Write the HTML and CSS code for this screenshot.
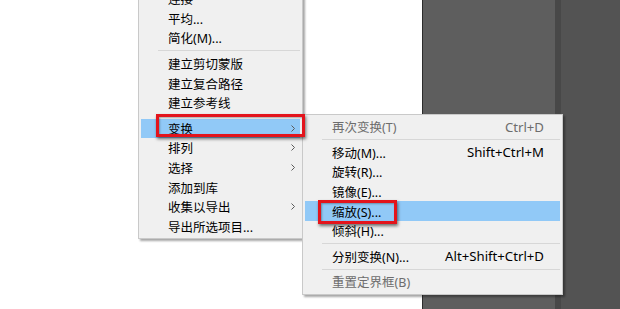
FILE: index.html
```html
<!DOCTYPE html>
<html lang="zh-CN">
<head>
    <meta charset="UTF-8">
    <meta name="viewport" content="width=device-width, initial-scale=1.0">
    <title>变换菜单</title>
    <link rel="stylesheet" href="styles.css">
</head>
<body>
    <div class="desktop">
        <div class="canvas"></div>
        <div class="panel"></div>
        <div class="panel-edge"></div>
        <div class="dock"></div>

        <!-- Context menu -->
        <ul class="menu menu-main">
            <li class="item">连接</li>
            <li class="item">平均...</li>
            <li class="item">简化(M)...</li>
            <li class="sep"></li>
            <li class="item">建立剪切蒙版</li>
            <li class="item">建立复合路径</li>
            <li class="item">建立参考线</li>
            <li class="sep"></li>
            <li class="item active">变换<span class="arrow"><svg width="4" height="7" viewBox="0 0 4 7"><path d="M0.5 0.5 L3.5 3.5 L0.5 6.5" fill="none" stroke="#5a5a5a" stroke-width="1"/></svg></span></li>
            <li class="item">排列<span class="arrow"><svg width="4" height="7" viewBox="0 0 4 7"><path d="M0.5 0.5 L3.5 3.5 L0.5 6.5" fill="none" stroke="#5a5a5a" stroke-width="1"/></svg></span></li>
            <li class="item">选择<span class="arrow"><svg width="4" height="7" viewBox="0 0 4 7"><path d="M0.5 0.5 L3.5 3.5 L0.5 6.5" fill="none" stroke="#5a5a5a" stroke-width="1"/></svg></span></li>
            <li class="item">添加到库</li>
            <li class="item">收集以导出<span class="arrow"><svg width="4" height="7" viewBox="0 0 4 7"><path d="M0.5 0.5 L3.5 3.5 L0.5 6.5" fill="none" stroke="#5a5a5a" stroke-width="1"/></svg></span></li>
            <li class="item">导出所选项目...</li>
        </ul>

        <!-- Transform submenu -->
        <ul class="menu menu-sub">
            <li class="item disabled">再次变换(T)<span class="shortcut">Ctrl+D</span></li>
            <li class="sep"></li>
            <li class="item">移动(M)...<span class="shortcut">Shift+Ctrl+M</span></li>
            <li class="item">旋转(R)...</li>
            <li class="item">镜像(E)...</li>
            <li class="item active">缩放(S)...</li>
            <li class="item">倾斜(H)...</li>
            <li class="sep"></li>
            <li class="item">分别变换(N)...<span class="shortcut">Alt+Shift+Ctrl+D</span></li>
            <li class="sep"></li>
            <li class="item disabled">重置定界框(B)</li>
        </ul>

        <!-- Red annotation frames -->
        <div class="callout callout-main"></div>
        <div class="callout callout-sub"></div>
    </div>
</body>
</html>
```

FILE: styles.css
```css
body {
    margin: 0;
    padding: 0;
    background-color: #fff;
    font-family: "Noto Sans", "Noto Sans CJK SC", sans-serif;
    font-size: 12.5px;
    color: #000;
}
.desktop {
    position: relative;
    display: flex;
    width: 620px;
    height: 309px;
    overflow: hidden;
}
.canvas {
    flex: 0 0 422px;
    background-color: #fff;
}
.panel {
    flex: 0 0 132px;
    background-color: #5e5e5e;
    border-left: 1px solid #2c2c2c;
}
.panel-edge {
    flex: 0 0 6px;
    background-color: #484848;
}
.dock {
    flex: 1;
    background-color: #535353;
}
.menu {
    position: absolute;
    list-style: none;
    margin: 0;
    padding: 2px;
    background-color: #f0f0f0;
    border: 1px solid #c9c9c9;
    box-shadow: 2px 2px 2px rgba(0, 0, 0, 0.35);
}
.menu-main {
    left: 138px;
    top: -14px;
    width: 159px;
}
.menu-sub {
    left: 302px;
    top: 114px;
    width: 255px;
}
.item {
    display: flex;
    align-items: center;
    height: 19.6px;
    padding: 0 5px 0 27px;
    white-space: nowrap;
}
.menu-sub .item {
    padding-right: 16px;
}
.item.active {
    background-color: #91c9f7;
}
.item.disabled {
    color: #6d6d6d;
}
.arrow {
    margin-left: auto;
    display: flex;
}
.shortcut {
    margin-left: auto;
    font-size: 13.2px;
}
.sep {
    height: 6px;
    display: flex;
    align-items: center;
    padding-left: 17px;
}
.sep::before {
    content: "";
    flex: 1;
    height: 1px;
    background-color: #d7d7d7;
}
.callout {
    position: absolute;
    border: 3px solid #e3141c;
    box-shadow: 1px 2px 3px rgba(0, 0, 0, 0.55), inset 1px 1px 2px rgba(0, 0, 0, 0.3);
}
.callout-main {
    left: 156px;
    top: 114px;
    width: 143px;
    height: 17px;
}
.callout-sub {
    left: 318px;
    top: 200px;
    width: 73px;
    height: 18px;
}
```
